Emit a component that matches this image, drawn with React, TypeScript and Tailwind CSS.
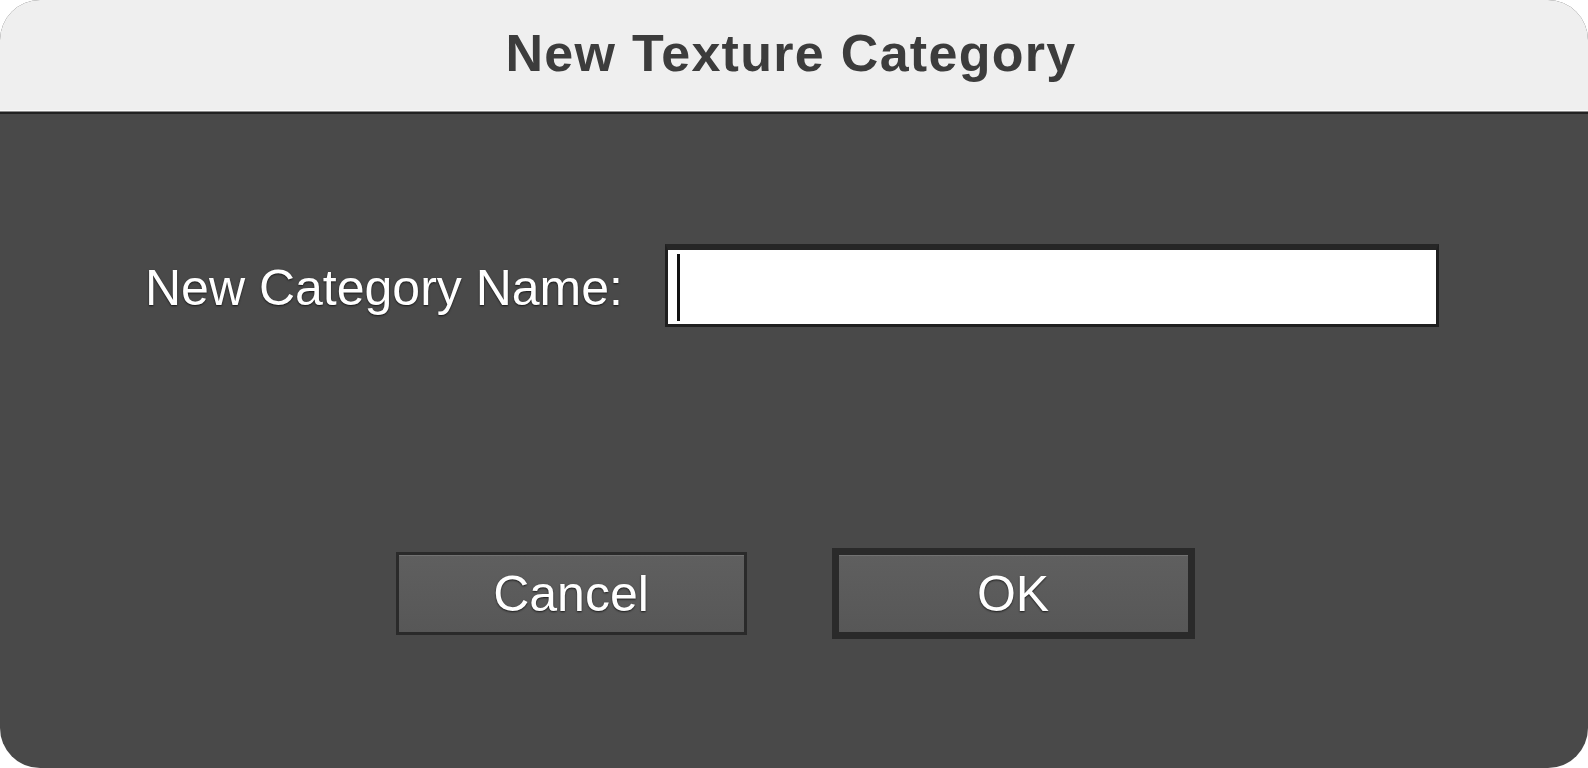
const fontStack = { fontFamily: '"Liberation Sans", Arial, sans-serif' };

export default function App() {
  return (
    <main
      style={fontStack}
      className="flex h-[768px] w-[1588px] flex-col overflow-hidden rounded-[40px] bg-[#494949]"
    >
      <header className="flex h-[114px] shrink-0 flex-col bg-[#efefef]">
        <h1 className="flex h-[110px] items-center justify-center pr-[6px] pb-[4px] text-[52px] font-bold tracking-[1.3px] text-[#3c3c3c]">
          New Texture Category
        </h1>
        <div className="h-[1px] bg-[#fafafa]" />
        <div className="h-[1px] bg-[#8a8a8a]" />
        <div className="h-[2px] bg-[#222222]" />
      </header>

      <div className="flex flex-1 flex-col">
        <div className="mt-[130px] flex items-center pl-[145px] pr-[149px]">
          <label className="mt-[4px] text-[50px] leading-none text-white [text-shadow:0_1px_2px_rgba(0,0,0,0.7)]">
            New Category Name:
          </label>
          <div className="ml-[42px] flex h-[83px] flex-1 items-center border-[3px] border-t-[6px] border-[#1f1f1f] border-t-[#262626] bg-white">
            <div className="ml-[9px] h-[67px] w-[3px] bg-[#111]" />
          </div>
        </div>

        <div className="mt-auto mb-[129px] flex items-center justify-center gap-[85px] pl-[2px]">
          <button className="flex h-[83px] w-[351px] items-center justify-center border-[3px] border-[#2a2a2a] bg-gradient-to-b from-[#5f5f5f] to-[#575757] text-[50px] leading-none text-white shadow-[inset_0_1px_0_rgba(255,255,255,0.12)] [text-shadow:0_1px_2px_rgba(0,0,0,0.7)]">
            Cancel
          </button>
          <button className="flex h-[91px] w-[363px] items-center justify-center border-[7px] border-[#2a2a2a] bg-gradient-to-b from-[#5f5f5f] to-[#575757] text-[50px] leading-none text-white shadow-[inset_0_1px_0_rgba(255,255,255,0.12)] [text-shadow:0_1px_2px_rgba(0,0,0,0.7)]">
            OK
          </button>
        </div>
      </div>
    </main>
  );
}
